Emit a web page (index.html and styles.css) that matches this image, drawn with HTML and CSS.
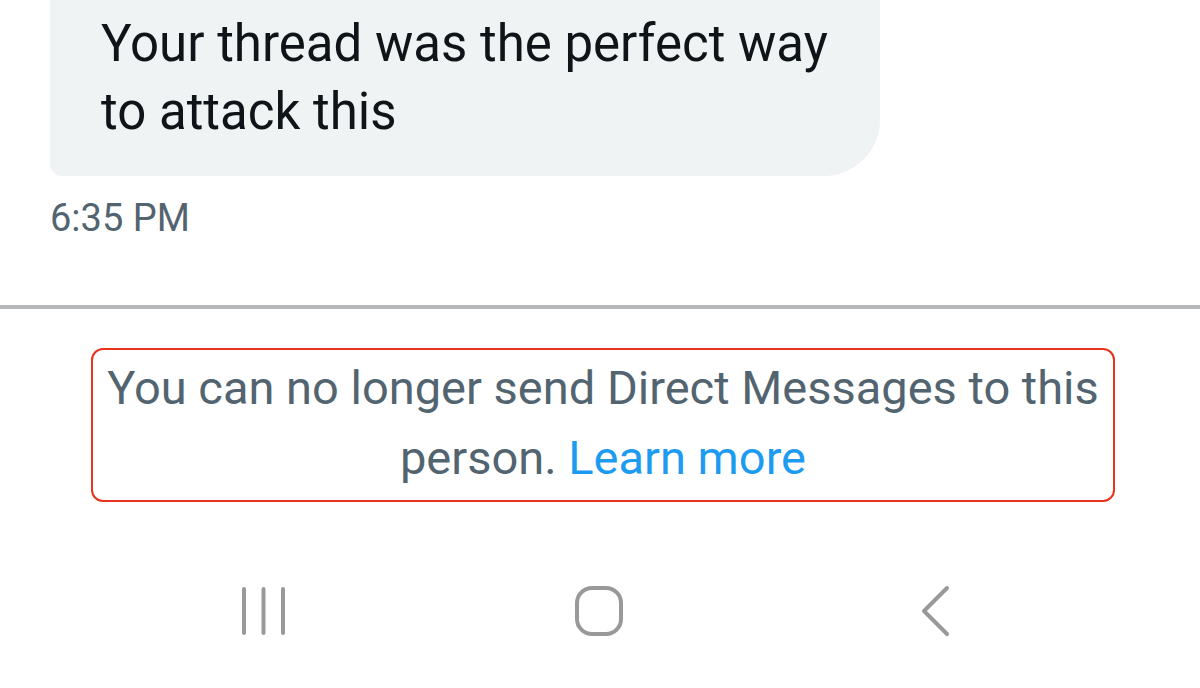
FILE: index.html
```html
<!DOCTYPE html>
<html lang="en">
<head>
  <meta charset="UTF-8">
  <title>Direct Messages</title>
  <link rel="stylesheet" href="styles.css">
</head>
<body>
  <div class="thread">
    <div class="bubble">
      <p class="bubble-text">Your thread was the perfect way to attack this</p>
    </div>
    <div class="timestamp">6:35 PM</div>
  </div>

  <div class="composer">
    <div class="notice">
      You can no longer send Direct Messages to this person. <a href="#" class="learn">Learn more</a>
    </div>
  </div>

  <div class="navbar">
    <svg class="nav-icon" width="48" height="50" viewBox="0 0 48 50">
      <path d="M4 3v44M23.5 3v44M43 3v44" stroke="#999" stroke-width="4" stroke-linecap="round" fill="none"/>
    </svg>
    <svg class="nav-icon" width="50" height="52" viewBox="0 0 50 52">
      <rect x="3" y="3" width="44" height="46" rx="15" stroke="#999" stroke-width="4" fill="none"/>
    </svg>
    <svg class="nav-icon back" width="32" height="52" viewBox="0 0 32 52">
      <path d="M28 3L5 26l23 23" stroke="#999" stroke-width="4" stroke-linecap="round" stroke-linejoin="round" fill="none"/>
    </svg>
  </div>
</body>
</html>
```

FILE: styles.css
```css
body {
  margin: 0;
  background: #fff;
  font-family: Roboto, "Noto Sans", sans-serif;
  overflow: hidden;
  height: 688px;
}

.thread {
  padding-left: 50px;
  height: 305px;
}

.bubble {
  width: 830px;
  background: #eff3f4;
  border-radius: 0 0 56px 12px;
  padding: 10px 0 30px 51px;
  box-sizing: border-box;
}

.bubble-text {
  margin: 0;
  font-size: 51px;
  line-height: 68px;
  color: #0f1419;
  width: 760px;
}

.timestamp {
  margin-top: 18px;
  font-size: 38px;
  line-height: 48px;
  color: #536471;
}

.composer {
  border-top: 4px solid #b4b8bb;
  padding: 39px 0 0 91px;
  height: 240px;
}

.notice {
  width: 1024px;
  height: 154px;
  box-sizing: border-box;
  border: 2px solid #e8321d;
  border-radius: 12px;
  text-align: center;
  font-size: 47px;
  line-height: 70px;
  color: #536471;
  padding-top: 3px;
}

.learn {
  color: #1d9bf0;
  text-decoration: none;
}

.navbar {
  position: absolute;
  top: 585px;
  left: 0;
  width: 1200px;
  box-sizing: border-box;
  padding-left: 240px;
  display: flex;
  align-items: center;
  gap: 286px;
}

.back {
  margin-left: 9px;
}
```
